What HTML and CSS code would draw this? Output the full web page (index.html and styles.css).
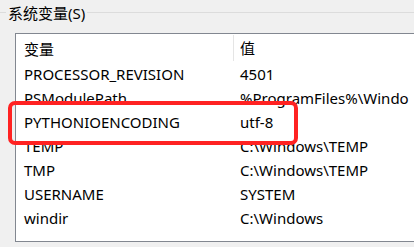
FILE: index.html
```html
<!DOCTYPE html>
<html lang="zh-CN">
<head>
<meta charset="utf-8">
<link rel="stylesheet" href="styles.css">
</head>
<body>
<div class="group">
  <div class="group-head">
    <span class="line short"></span>
    <span class="title">系统变量(S)</span>
    <span class="line grow"></span>
  </div>
  <div class="listbox">
    <div class="row head">
      <div class="c1">变量</div>
      <div class="c2">值</div>
    </div>
    <div class="row"><div class="c1">PROCESSOR_REVISION</div><div class="c2">4501</div></div>
    <div class="row"><div class="c1">PSModulePath</div><div class="c2">%ProgramFiles%\Windo</div></div>
    <div class="row"><div class="c1">PYTHONIOENCODING</div><div class="c2">utf-8</div></div>
    <div class="row"><div class="c1">TEMP</div><div class="c2">C:\Windows\TEMP</div></div>
    <div class="row"><div class="c1">TMP</div><div class="c2">C:\Windows\TEMP</div></div>
    <div class="row"><div class="c1">USERNAME</div><div class="c2">SYSTEM</div></div>
    <div class="row"><div class="c1">windir</div><div class="c2">C:\Windows</div></div>
  </div>
  <div class="highlight"></div>
</div>
</body>
</html>
```
FILE: styles.css
```css
html, body {
  margin: 0;
  padding: 0;
  background: #f0f0f0;
  overflow: hidden;
}
body {
  width: 414px;
  height: 247px;
  font-family: "Noto Sans", "Noto Sans CJK SC", sans-serif;
  font-size: 15px;
  color: #000;
}
.group {
  position: relative;
}
.group-head {
  display: flex;
  align-items: center;
  height: 20px;
  padding-top: 3px;
}
.line {
  height: 1px;
  background: #dcdcdc;
  margin-top: -2px;
}
.short { width: 6px; }
.grow { flex: 1; }
.title {
  padding: 0 2px;
  line-height: 20px;
  white-space: nowrap;
}
.listbox {
  margin: 10px 0 0 15px;
  width: 399px;
  height: 207px;
  border: 1px solid #828790;
  border-right: none;
  background: #fff;
  overflow: hidden;
}
.row {
  display: flex;
  height: 24px;
  align-items: center;
  white-space: nowrap;
}
.row.head {
  height: 28px;
}
.c1 {
  flex: 0 0 217px;
  box-sizing: border-box;
  padding-left: 8px;
}
.c2 {
  flex: 1 1 auto;
  min-width: 0;
  padding-left: 7px;
  overflow: hidden;
}
.head .c2 {
  border-left: 1px solid #e5e5e5;
  height: 26px;
  line-height: 26px;
  padding-left: 6px;
}
.highlight {
  position: absolute;
  left: 8px;
  top: 101px;
  width: 290px;
  height: 44px;
  box-sizing: border-box;
  border: 4px solid #ff2222;
  border-radius: 7px;
}
```
